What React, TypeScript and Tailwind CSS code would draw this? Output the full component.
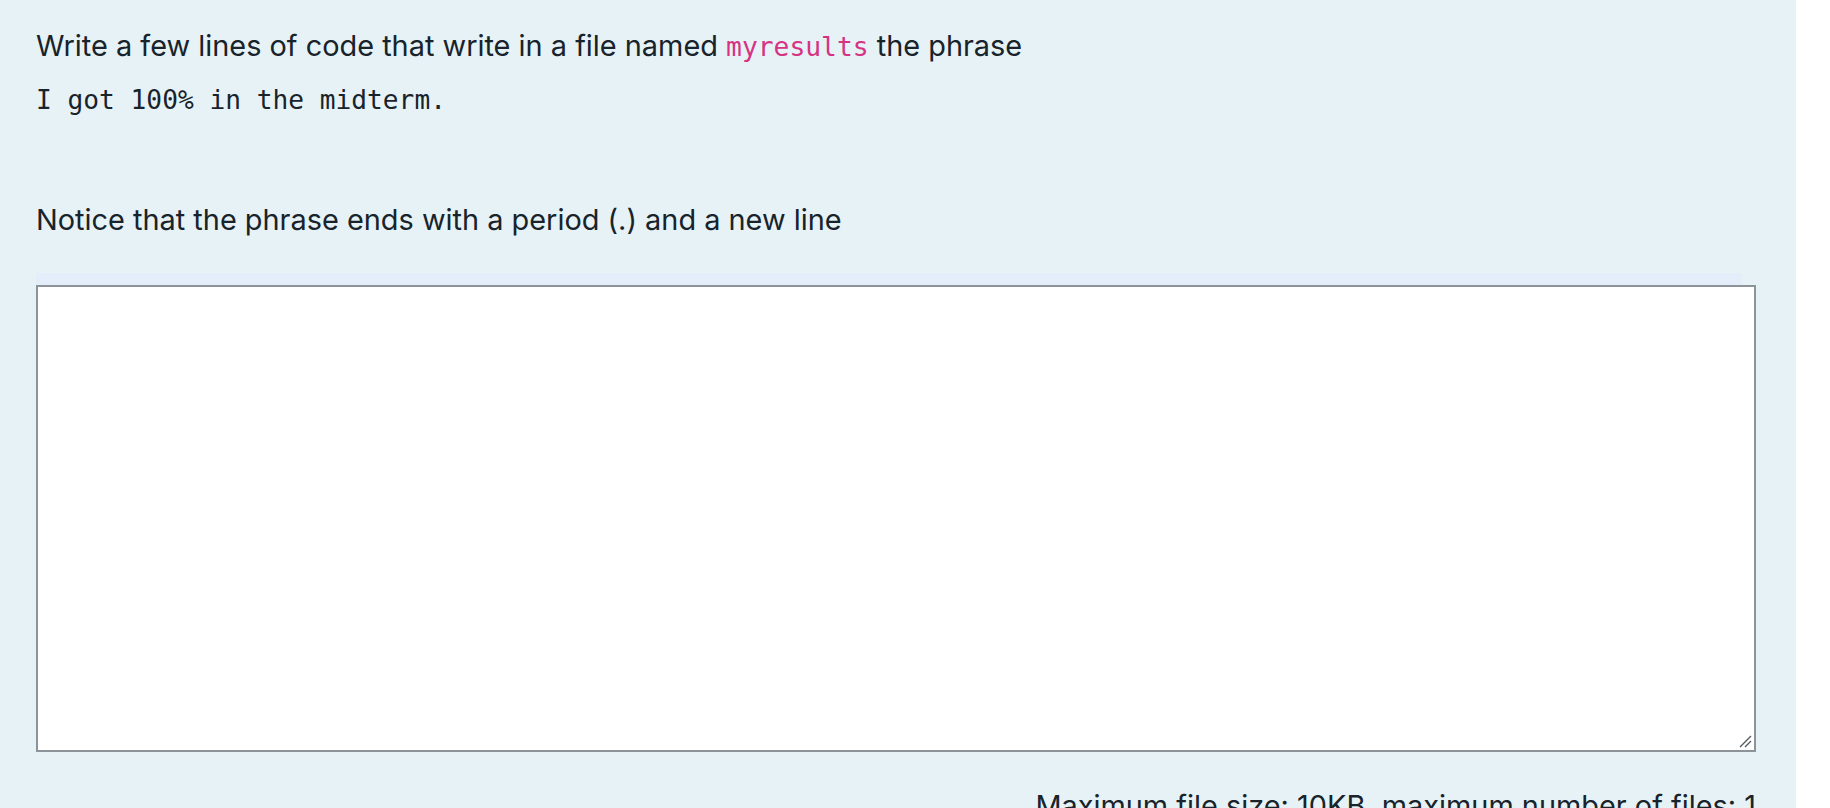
import React from "react";

// ─── Component ────────────────────────────────────────────────────────────────

export default function App() {
  return (
    <div className="min-h-screen bg-white flex">
      <div
        className="w-[1796px] min-h-screen bg-[#e6f2f5] pl-[36px] pr-[40px] pt-[25px] text-[#18232b] text-[28.9px] leading-[42px]"
        style={{ fontFamily: "Inter, 'Noto Sans', sans-serif" }}
      >
        {/* Prompt */}
        <p>
          Write a few lines of code that write in a file named{" "}
          <code className="text-[#d63384] text-[26.3px] font-['DejaVu_Sans_Mono',monospace]">
            myresults
          </code>{" "}
          the phrase
        </p>
        <pre className="mt-[13px] text-[26.2px] leading-[38px] text-[#18232b] font-['DejaVu_Sans_Mono',monospace]">
          I got 100% in the midterm.
        </pre>

        <p className="mt-[80px]">Notice that the phrase ends with a period (.) and a new line</p>

        {/* Answer box */}
        <div className="mt-[32px] h-[12px] w-[1706px] bg-[#e3eefa]" />
        <div className="relative">
          <textarea className="block w-full h-[467px] bg-white border-2 border-[#8d9499] outline-none resize-none" />
          <svg
            className="absolute right-[4px] bottom-[4px]"
            width="14"
            height="14"
            viewBox="0 0 14 14"
          >
            <path d="M13 2 L2 13 M13 7 L7 13" stroke="#555b60" strokeWidth="1.4" />
          </svg>
        </div>

        <p className="mt-[33px] text-right">Maximum file size: 10KB, maximum number of files: 1</p>
      </div>
    </div>
  );
}
